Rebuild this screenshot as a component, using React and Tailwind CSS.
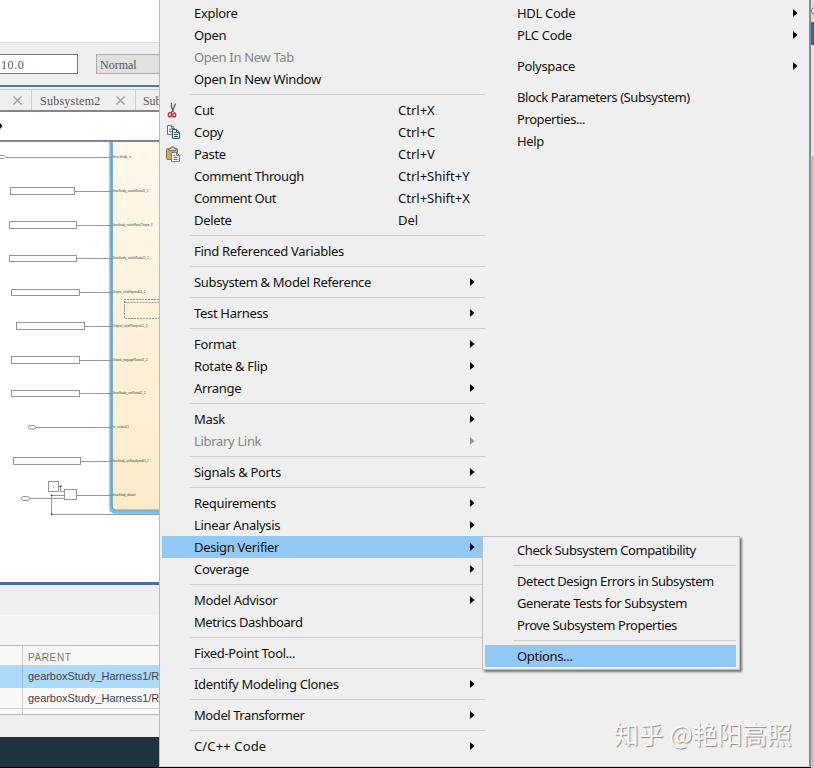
import React from "react";
import { clsx } from "clsx";

const leftMenu = [
  { name: "Explore" },
  { name: "Open" },
  { name: "Open In New Tab", disabled: true },
  { name: "Open In New Window" },
  null,
  { name: "Cut", keys: "Ctrl+X", icon: "cut" },
  { name: "Copy", keys: "Ctrl+C", icon: "copy" },
  { name: "Paste", keys: "Ctrl+V", icon: "paste" },
  { name: "Comment Through", keys: "Ctrl+Shift+Y", tight: true },
  { name: "Comment Out", keys: "Ctrl+Shift+X", tight: true },
  { name: "Delete", keys: "Del" },
  null,
  { name: "Find Referenced Variables" },
  null,
  { name: "Subsystem & Model Reference", sub: true },
  null,
  { name: "Test Harness", sub: true },
  null,
  { name: "Format", sub: true },
  { name: "Rotate & Flip", sub: true },
  { name: "Arrange", sub: true },
  null,
  { name: "Mask", sub: true },
  { name: "Library Link", sub: true, disabled: true },
  null,
  { name: "Signals & Ports", sub: true },
  null,
  { name: "Requirements", sub: true },
  { name: "Linear Analysis", sub: true },
  { name: "Design Verifier", sub: true, active: true },
  { name: "Coverage", sub: true },
  null,
  { name: "Model Advisor", sub: true },
  { name: "Metrics Dashboard", tight: true },
  null,
  { name: "Fixed-Point Tool..." },
  null,
  { name: "Identify Modeling Clones", sub: true },
  null,
  { name: "Model Transformer", sub: true, tight: true },
  null,
  { name: "C/C++ Code", sub: true, wide: true },
];

const rightMenu = [
  { name: "HDL Code", sub: true },
  { name: "PLC Code", sub: true },
  null,
  { name: "Polyspace", sub: true },
  null,
  { name: "Block Parameters (Subsystem)", tight: true },
  { name: "Properties...", tight: true },
  { name: "Help" },
];

const verifierMenu = [
  { name: "Check Subsystem Compatibility", tight: true },
  null,
  { name: "Detect Design Errors in Subsystem", tight: true },
  { name: "Generate Tests for Subsystem", tight: true },
  { name: "Prove Subsystem Properties", tight: true },
  null,
  { name: "Options...", active: true },
];

// input blocks: x, y, width, height, line y, label, label width
const blocks = [
  [10.5, 45.5, 64, 7, 49.5, "GearStudy_ratioInRatio01_2", 36],
  [9.5, 79.5, 67, 7, 83.5, "GearStudy_ratioInRatio1Torque_2", 40],
  [9.5, 113.5, 67, 6, 116.5, "GearStudy_ratioInRatio02_2", 36],
  [11.5, 147.5, 68, 6, 150.5, "Output_shaftSpeed01_2", 33],
  [16.5, 180.5, 68, 7, 184.5, "Output_shaftTorque01_2", 35],
  [11.5, 214.5, 68, 7, 218.5, "Output_engageRatio01_2", 35],
  [11.5, 248.5, 68, 6, 251.5, "GearStudy_runRatio01_2", 33],
  [13.5, 315.5, 67, 7, 319.5, "GearStudy_runRatioSpeed01_2", 36],
];

const icons = {
  cut: (
    <svg width="16" height="16" viewBox="0 0 16 16" fill="none">
      <path d="M6.500 1v4l2 5M10.500 1.500L8 8l-2 3" stroke="#566068" strokeWidth="1.3" />
      <ellipse cx="4.900" cy="12.700" rx="1.600" ry="2.100" stroke="#c22f38" strokeWidth="1.400" />
      <ellipse cx="9.200" cy="13" rx="1.500" ry="2" stroke="#c22f38" strokeWidth="1.400" />
    </svg>
  ),
  copy: (
    <svg width="16" height="16" viewBox="0 0 16 16" fill="none">
      <path d="M2.500 1.500h4l3 3v6h-7z" fill="#f5f9fc" stroke="#66747f" />
      <path d="M6.500 1.500v3h3M4 5.500h2M4 7.500h3" stroke="#66747f" />
      <path d="M7.500 5.500h4l3 3v6h-7z" fill="#e5f2fa" stroke="#34566f" />
      <path d="M11.500 5.500v3h3M9 8.500h2M9 10.500h4M9 12.500h4" stroke="#34566f" />
    </svg>
  ),
  paste: (
    <svg width="16" height="16" viewBox="0 0 16 16" fill="none">
      <rect x="1.500" y="2.500" width="11" height="11" rx="1" fill="#cda765" stroke="#8a7659" />
      <path d="M4 4.500v-2h2V1h3v1.500h2v2z" fill="#eee8dc" stroke="#796d5d" />
      <path d="M6.500 6.500h5l3 3v6h-8z" fill="#f4f9ff" stroke="#71818f" />
      <path d="M11.500 6.500v3h3M8.500 9.500h2M8.500 11.500h4M8.500 13.500h4" stroke="#557b9d" />
    </svg>
  ),
};

const MenuItem = ({ item }) => (
  <div
    className={clsx(
      "flex h-[22px] items-center",
      item.active && "bg-[#91c8f6]",
      item.disabled ? "text-[#858585]" : "text-[#111]"
    )}
  >
    <span className="flex w-8 shrink-0 pl-[3px]">{item.icon && icons[item.icon]}</span>
    <span
      className={clsx(
        "w-[204px] shrink-0 pt-px whitespace-nowrap",
        item.tight ? "tracking-[-.42px]" : item.wide ? "tracking-[.13px]" : "tracking-[-.32px]"
      )}
    >
      {item.name}
    </span>
    <span className="w-[72px] shrink-0 pt-px whitespace-nowrap">{item.keys}</span>
    {item.sub && (
      <svg width="5" height="8" viewBox="0 0 5 8" className="mb-px shrink-0">
        <path d="M0 0v8l4.500-4z" fill={item.disabled ? "#999" : "#000"} />
      </svg>
    )}
  </div>
);

const MenuList = ({ items }) =>
  items.map((item, i) =>
    item ? (
      <MenuItem key={i} item={item} />
    ) : (
      <div key={i} className="flex h-[9px] items-center pl-7">
        <div className="h-px w-full bg-[#d0d0d0]"></div>
      </div>
    )
  );

const CloseIcon = () => (
  <svg width="9" height="9" viewBox="0 0 9 9" className="shrink-0">
    <path d="M.5.5l8 8M8.500.5l-8 8" stroke="#a2a2a2" strokeWidth="1.400" />
  </svg>
);

const Diagram = () => (
  <svg width="159" height="440" viewBox="0 0 159 440" fill="none" className="block bg-white">
    <defs>
      <linearGradient id="cream" x1="0" y1="0" x2="0" y2="1">
        <stop offset="0" stopColor="#fff8ec" />
        <stop offset="1" stopColor="#feebc9" />
      </linearGradient>
    </defs>
    <path d="M111-5v370q0 5 5 5h50V-5z" fill="url(#cream)" stroke="#78bde6" strokeWidth="3.500" />
    <path d="M112 0v364q0 4 4 4h43" stroke="#477da0" strokeWidth=".7" />
    <g stroke="#8b8b8b" strokeWidth=".9">
      <path d="M0 13.500h4q3 1.500 0 3H0M6 15.500h105" />
      {blocks.map(([x, y, w, h, line]) => (
        <g key={y}>
          <rect x={x} y={y} width={w} height={h} fill="#fff" />
          <path d={`M${x + w} ${line}H112`} />
        </g>
      ))}
      <rect x="28.500" y="283.500" width="7" height="3.500" rx="1.700" />
      <path d="M36 285.500h76" />
      <rect x="48.500" y="339.500" width="10" height="10" />
      <rect x="64.500" y="347.500" width="12" height="10" />
      <path d="M58.500 344.500h2v5h4M77 353.500h35M64.500 353.500h-13v19H159" />
      <rect x="21.500" y="354.500" width="8" height="4" rx="2" />
      <path d="M30 356.500h34" />
      <path d="M159 157.500h-34.500v19H159M124.500 160.500H159" strokeDasharray="2 1" />
    </g>
    <path d="M60 343.500h1.500v1.500H60zM50.800 352.500h1.500v1.500h-1.500zM50.800 371.500h1.500v1.500h-1.500z" fill="#333" />
    <g fill="#3d3932" fontFamily="Liberation Sans, sans-serif" fontSize="2.700">
      <text x="112.500" y="16" textLength="19">GearStudy_in</text>
      {blocks.map(([, , , , line, label, width]) => (
        <text key={label} x="112.500" y={line + 0.8} textLength={width} lengthAdjust="spacingAndGlyphs">
          {label}
        </text>
      ))}
      <text x="113" y="286.300" textLength="16">In_output01</text>
      <text x="112.500" y="354.300" textLength="23">GearStudy_default</text>
      <text x="52.500" y="345.500">1</text>
    </g>
  </svg>
);

const ModelWindow = () => (
  <div className="flex h-[768px] w-[159px] shrink-0 flex-col overflow-hidden bg-[#efefef]">
    <div className="h-[43px] shrink-0 border-b border-[#ddd] bg-white"></div>
    <div className="flex h-[42px] shrink-0 pt-[11px] font-['Liberation_Serif',serif] text-[12px] text-[#555]">
      <div className="flex h-5 w-[78px] shrink-0 items-center border border-l-0 border-[#777] bg-white pt-px pl-px tracking-[.6px]">
        10.0
      </div>
      <div className="ml-[18px] flex h-5 w-[63px] shrink-0 items-center border border-r-0 border-[#aaa] bg-[#e1e1e1] pt-px pl-[3px]">
        Normal
      </div>
    </div>
    <div className="h-[2px] shrink-0 bg-[#438090]"></div>
    <div className="mt-[2px] flex h-[23px] shrink-0 border-t border-b-2 border-t-[#ccc] border-b-[#858585] font-['Liberation_Serif',serif] text-[12px] text-[#555]">
      <div className="flex w-8 shrink-0 items-center border-r border-[#ccc] pl-[13px]">
        <CloseIcon />
      </div>
      <div className="flex w-[104px] shrink-0 items-center border-r border-[#ccc] pr-[10px] pl-[8px]">
        <span className="flex-1 pt-[2px] tracking-[.25px]">Subsystem2</span>
        <CloseIcon />
      </div>
      <div className="flex min-w-0 items-center pt-[2px] pl-[7px] tracking-[-.1px]">Sub</div>
    </div>
    <div className="flex h-[30px] shrink-0 items-center border-b-2 border-[#858585] bg-white">
      <svg width="3" height="6" viewBox="0 0 3 6">
        <path d="M0 0l2.500 3L0 6z" fill="#111" />
      </svg>
    </div>
    <Diagram />
    <div className="h-[3px] shrink-0 bg-[#4b719b]"></div>
    <div className="h-[30px] shrink-0"></div>
    <div className="h-[30px] shrink-0 bg-[#f4f4f4]"></div>
    <div className="h-[70px] shrink-0 border-y border-[#b8b8b8] bg-[#f8f8f8] font-['Liberation_Sans',Arial,sans-serif] text-[11px] text-[#3f4347]">
      <div className="flex h-[19px]">
        <div className="w-[23px] shrink-0 border-r border-[#ccc]"></div>
        <div className="flex items-center bg-[#f6f6f6] pt-[3px] pl-[5px] text-[10px] tracking-[.6px] text-[#777]">PARENT</div>
      </div>
      <div className="flex h-[23px] bg-[#addaf9]">
        <div className="w-[23px] shrink-0 border-r border-[#99bdd4]"></div>
        <div className="flex items-center pl-[5px] tracking-[-.04px] whitespace-nowrap">gearboxStudy_Harness1/R</div>
      </div>
      <div className="flex h-[21px] border-b border-[#ccc]">
        <div className="w-[23px] shrink-0 border-r border-[#ccc]"></div>
        <div className="flex items-center pl-[5px] tracking-[-.04px] whitespace-nowrap">gearboxStudy_Harness1/R</div>
      </div>
      <div className="h-[5px] w-[23px] border-r border-[#ccc]"></div>
    </div>
    <div className="h-[22px] shrink-0"></div>
    <div className="flex-1 border-b border-black bg-[#20323e]"></div>
  </div>
);

const App = () => {
  return (
    <div className="relative flex h-[768px] w-[814px] overflow-hidden bg-black font-['Noto_Sans','Open_Sans',sans-serif] text-[13px]">
      <ModelWindow />

      {/* context menu */}
      <div className="flex h-[767px] w-[652px] shrink-0 border-r-2 border-b border-l border-r-[#858b93] border-b-[#ccc] border-l-[#bbb] bg-[#efefef] pt-[2px] pl-[2px]">
        <div className="w-[323px] shrink-0">
          <MenuList items={leftMenu} />
        </div>
        <div className="w-[323px] shrink-0">
          <MenuList items={rightMenu.slice(0, 2)} />
          <div className="h-[9px]"></div>
          <MenuList items={rightMenu.slice(3, 4)} />
          <div className="h-[9px]"></div>
          <MenuList items={rightMenu.slice(5)} />
        </div>
      </div>

      {/* edge of the window behind */}
      <div className="flex h-[768px] flex-1 flex-col bg-[#bbc4d0]">
        <div className="h-[22px] bg-[#d8dddc] pt-[7px]">
          <div className="h-2 w-2 rounded-full border border-[#b5656a]"></div>
        </div>
        <div className="h-[23px] bg-[#236ca5]"></div>
        <div className="h-[111px] bg-[#e4e4e4]"></div>
        <div className="flex-1"></div>
      </div>

      {/* Design Verifier submenu */}
      <div className="absolute top-[536px] left-[482px] h-[134px] w-[258px] overflow-hidden border border-[#bfbfbf] bg-[#efefef] py-[2px] pr-[3px] pl-[2px] shadow-[2px_2px_2px_#777]">
        <MenuList items={verifierMenu} />
      </div>

      {/* watermark */}
      <div className="absolute top-[715px] left-[614px] font-['Noto_Sans_CJK_SC',sans-serif] text-[24.800px] leading-[36px] whitespace-nowrap text-[#f8f8f8] [text-shadow:1px_1px_1px_#8c8c8c]">
        知乎 @艳阳高照
      </div>
    </div>
  );
};

export default App;
